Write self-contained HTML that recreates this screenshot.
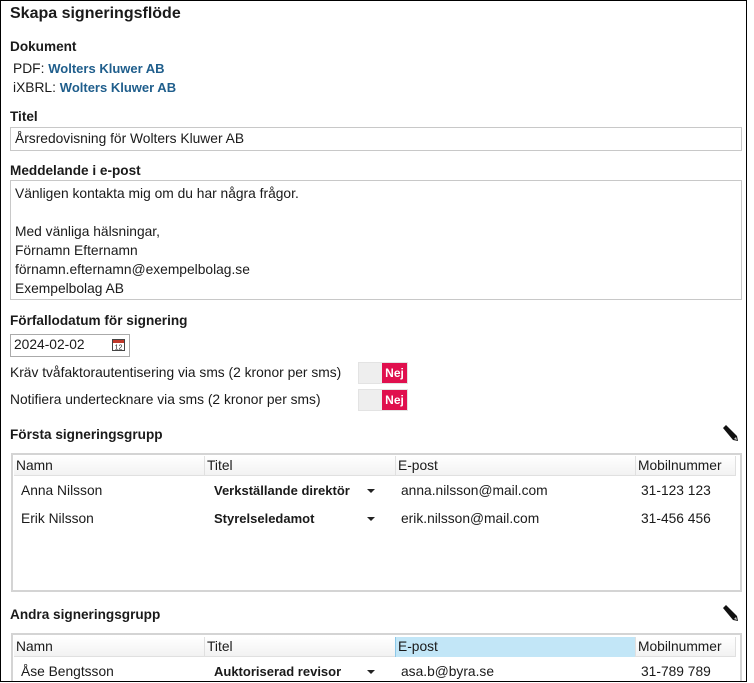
<!DOCTYPE html>
<html><head><meta charset="utf-8"><style>
*{margin:0;padding:0;box-sizing:border-box}
body{width:754px;height:683px;background:#fff;font-family:"Segoe UI","Liberation Sans",sans-serif;font-size:13.8px;color:#1a1a1a;position:relative;overflow:hidden}
#w{position:absolute;left:0;top:0;width:747px;height:682px;border:1px solid #000;overflow:hidden}
.a{position:absolute;white-space:nowrap;line-height:18px}
.b{font-weight:bold;font-size:13.6px}
.lnk{color:#1f5e8c;font-weight:bold;font-size:13px}
.box{position:absolute;border:1px solid #c8c8c8;background:#fff}
.tg{position:absolute;width:50px;height:22px;background:#eeeeee;border:1px solid #e3e3e3}
.tg span{position:absolute;right:0;top:0;width:25px;height:20px;background:#e0104e;color:#fff;font-weight:bold;font-size:12px;text-align:center;line-height:20px}
.hdr{position:absolute;height:20px;background:linear-gradient(#fff,#f2f2f2);border-bottom:1px solid #e0e0e0}
.col{position:absolute;top:0;height:20px;border-left:1px solid #e0e0e0;padding-left:2px;line-height:20px}
.arr{position:absolute;width:0;height:0;border-left:4px solid transparent;border-right:4px solid transparent;border-top:4px solid #222}
</style></head><body>
<div id="w">
<div class="a b" style="left:9px;top:4px;font-size:16px">Skapa signeringsflöde</div>
<div class="a b" style="left:9px;top:37px">Dokument</div>
<div class="a" style="left:12px;top:59px">PDF: <span class="lnk">Wolters Kluwer AB</span></div>
<div class="a" style="left:12px;top:78px">iXBRL: <span class="lnk">Wolters Kluwer AB</span></div>
<div class="a b" style="left:9px;top:107px">Titel</div>
<div class="box" style="left:9px;top:126px;width:732px;height:24px"></div>
<div class="a" style="left:14px;top:129px">Årsredovisning för Wolters Kluwer AB</div>
<div class="a b" style="left:9px;top:161px">Meddelande i e-post</div>
<div class="box" style="left:9px;top:179px;width:732px;height:120px"></div>
<div class="a" style="left:14px;top:183px;line-height:19px">Vänligen kontakta mig om du har några frågor.<br><br>Med vänliga hälsningar,<br>Förnamn Efternamn<br>förnamn.efternamn@exempelbolag.se<br>Exempelbolag AB</div>
<div class="a b" style="left:9px;top:311px">Förfallodatum för signering</div>
<div class="box" style="left:9px;top:333px;width:120px;height:23px;border-color:#aaa"></div>
<div class="a" style="left:13px;top:335px">2024-02-02</div>
<svg style="position:absolute;left:111px;top:337px" width="13" height="13" viewBox="0 0 13 13"><rect x="0.5" y="1.5" width="12" height="11" fill="#fff" stroke="#444"/><rect x="1" y="2" width="11" height="3" fill="#c0392b"/><text x="6.5" y="11.5" font-size="7" text-anchor="middle" font-family="Liberation Sans" fill="#222">12</text></svg>
<div class="a" style="left:9px;top:363px">Kräv tvåfaktorautentisering via sms (2 kronor per sms)</div>
<div class="tg" style="left:357px;top:361px"><span>Nej</span></div>
<div class="a" style="left:9px;top:390px">Notifiera undertecknare via sms (2 kronor per sms)</div>
<div class="tg" style="left:357px;top:388px"><span>Nej</span></div>
<div class="a b" style="left:9px;top:425px">Första signeringsgrupp</div>
<svg style="position:absolute;left:719px;top:423px" width="20" height="20" viewBox="0 0 20 20"><path d="M3 4 L6 1 L17 12 L18 17 L13 16 Z" fill="#111"/><path d="M14 15 L17 16 L16 13" fill="#ccc"/></svg>
<div class="box" style="left:10px;top:452px;width:731px;height:139px;border:2px solid #d4d4d4"></div>
<div class="hdr" style="left:13px;top:455px;width:722px">
<div class="col" style="left:0;border:none">Namn</div><div class="col" style="left:190px">Titel</div><div class="col" style="left:381px">E-post</div><div class="col" style="left:621px;width:101px;border-right:1px solid #e0e0e0">Mobilnummer</div></div>
<div class="a" style="left:20px;top:481px">Anna Nilsson</div>
<div class="a b" style="left:213px;top:481px;font-size:13px">Verkställande direktör</div><div class="arr" style="left:366px;top:488px"></div>
<div class="a" style="left:400px;top:481px">anna.nilsson@mail.com</div>
<div class="a" style="left:640px;top:481px">31-123 123</div>
<div class="a" style="left:20px;top:509px">Erik Nilsson</div>
<div class="a b" style="left:213px;top:509px;font-size:13px">Styrelseledamot</div><div class="arr" style="left:366px;top:516px"></div>
<div class="a" style="left:400px;top:509px">erik.nilsson@mail.com</div>
<div class="a" style="left:640px;top:509px">31-456 456</div>
<div class="a b" style="left:9px;top:605px">Andra signeringsgrupp</div>
<svg style="position:absolute;left:719px;top:603px" width="20" height="20" viewBox="0 0 20 20"><path d="M3 4 L6 1 L17 12 L18 17 L13 16 Z" fill="#111"/><path d="M14 15 L17 16 L16 13" fill="#ccc"/></svg>
<div class="box" style="left:10px;top:632px;width:731px;height:60px;border:2px solid #d4d4d4"></div>
<div class="hdr" style="left:13px;top:636px;width:722px">
<div class="col" style="left:0;border:none">Namn</div><div class="col" style="left:190px">Titel</div><div class="col" style="left:381px;width:240px;background:#c2e6f7;border-left:1px solid #8cc8e8">E-post</div><div class="col" style="left:621px;width:101px;border-right:1px solid #e0e0e0">Mobilnummer</div></div>
<div class="a" style="left:20px;top:662px">Åse Bengtsson</div>
<div class="a b" style="left:213px;top:662px;font-size:13px">Auktoriserad revisor</div><div class="arr" style="left:366px;top:669px"></div>
<div class="a" style="left:400px;top:662px">asa.b@byra.se</div>
<div class="a" style="left:640px;top:662px">31-789 789</div>
</div>
</body></html>
